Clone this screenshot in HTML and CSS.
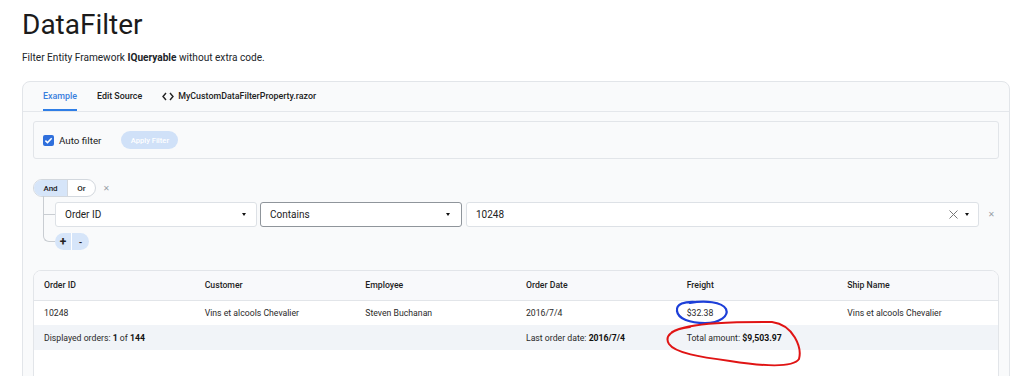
FILE: index.html
```html
<!DOCTYPE html>
<html>
<head>
<meta charset="utf-8">
<link rel="stylesheet" href="styles.css">
</head>
<body>
<div class="page">
  <h1 class="title">DataFilter</h1>
  <p class="lead">Filter Entity Framework <b>IQueryable</b> without extra code.</p>

  <div class="card">
    <div class="tabs">
      <div class="tab active">Example</div>
      <div class="tab">Edit Source</div>
      <div class="tab"><svg class="code-ic" width="12" height="9" viewBox="0 0 12 9"><path d="M4 1 L1 4.5 L4 8 M8 1 L11 4.5 L8 8" fill="none" stroke="#222" stroke-width="1.4"/></svg>MyCustomDataFilterProperty.razor</div>
    </div>

    <div class="card-body">
      <div class="auto-box">
        <span class="checkbox"><svg width="11" height="11" viewBox="0 0 11 11"><path d="M2.4 5.6 L4.5 7.6 L8.7 3.3" fill="none" stroke="#fff" stroke-width="1.5"/></svg></span>
        <span class="auto-label">Auto filter</span>
        <span class="apply-btn">Apply Filter</span>
      </div>

      <div class="group">
        <div class="group-head">
          <div class="logic">
            <span class="seg seg-on">And</span>
            <span class="seg seg-off">Or</span>
          </div>
          <span class="x-small">&#x2715;</span>
        </div>
        <div class="tree">
          <div class="branch cond">
            <div class="select field"><span>Order ID</span><span class="caret"></span></div>
            <div class="select op"><span>Contains</span><span class="caret"></span></div>
            <div class="select value"><span>10248</span><span class="value-tools"><svg width="9" height="9" viewBox="0 0 9 9"><path d="M0.5 0.5 L8.5 8.5 M8.5 0.5 L0.5 8.5" stroke="#777" stroke-width="1"/></svg><span class="caret"></span></span></div>
            <span class="x-remove">&#x2715;</span>
          </div>
          <div class="branch add">
            <div class="addgrp">
              <span class="aseg plus">+</span>
              <span class="aseg minus">-</span>
            </div>
          </div>
        </div>
      </div>

      <div class="grid">
        <table>
          <thead>
            <tr><th>Order ID</th><th>Customer</th><th>Employee</th><th>Order Date</th><th>Freight</th><th>Ship Name</th></tr>
          </thead>
          <tbody>
            <tr><td>10248</td><td>Vins et alcools Chevalier</td><td>Steven Buchanan</td><td>2016/7/4</td><td>$32.38</td><td>Vins et alcools Chevalier</td></tr>
          </tbody>
          <tfoot>
            <tr><td>Displayed orders: <b>1</b> of <b>144</b></td><td></td><td></td><td>Last order date: <b>2016/7/4</b></td><td>Total amount: <b>$9,503.97</b></td><td></td></tr>
          </tfoot>
        </table>
        <div class="grid-space"></div>
      </div>
    </div>
  </div>
</div>

<svg class="marks" width="1023" height="376" viewBox="0 0 1023 376">
  <path d="M690 303 C 705 300, 722 302, 726 309 C 729 316, 720 323, 705 323 C 690 323, 678 319, 677 311 C 676 304, 684 301, 697 302" fill="none" stroke="#1d3fd8" stroke-width="2.2" stroke-linecap="round"/>
  <path d="M672 332 C 690 322, 740 322, 772 322 C 794 325, 802 348, 799 359 C 793 368, 762 366, 730 361 C 700 357, 675 353, 669 344 C 664 336, 672 329, 690 327" fill="none" stroke="#e01414" stroke-width="2" stroke-linecap="round"/>
</svg>
</body>
</html>
```

FILE: styles.css
```css
* { box-sizing: border-box; }
html, body { margin: 0; background: #fff; }
body {
  font-family: Roboto, "Liberation Sans", sans-serif;
  color: #212529;
  position: relative;
  overflow: hidden;
  height: 376px;
}
.page { padding: 8px 13px 0 22px; }
.title {
  margin: 0;
  font-size: 28px;
  line-height: 34px;
  font-weight: 400;
  color: #1b1b1b;
}
.lead {
  margin: 8px 0 0;
  font-size: 10.1px;
  line-height: 16px;
}
.lead b { font-weight: 700; }

.card {
  margin-top: 15px;
  border: 1px solid #e2e5e9;
  border-radius: 8px;
  background: #f9fafb;
  height: 400px;
}
.tabs {
  display: flex;
  gap: 20px;
  padding-left: 20px;
  border-bottom: 1px solid #e4e7eb;
  height: 30px;
}
.tab {
  display: flex;
  align-items: center;
  font-size: 8.9px;
  font-weight: 500;
  color: #222;
  border-bottom: 2px solid transparent;
  padding-top: 1px;
}
.tab.active { color: #3a7fdd; border-bottom-color: #2f7ee6; }
.code-ic { margin-right: 4px; }

.card-body { padding: 9px 10px 0 10px; }

.auto-box {
  display: flex;
  align-items: center;
  height: 38px;
  border: 1px solid #e2e5e9;
  border-radius: 3px;
  padding-left: 9px;
  background: #f9fafb;
}
.checkbox {
  width: 11px; height: 11px;
  border-radius: 2px;
  background: #2f6fdc;
  display: flex;
}
.auto-label {
  margin-left: 5px;
  font-size: 9.8px;
  color: #222;
}
.apply-btn {
  margin-left: 20px;
  width: 57px; height: 18px;
  border-radius: 9px;
  background: #d0e1f8;
  color: #fff;
  font-size: 7.6px;
  font-weight: 500;
  display: flex; align-items: center; justify-content: center;
}

.group { margin-top: 20px; }
.group-head { display: flex; align-items: center; }
.logic {
  display: flex;
  height: 18px;
  border: 1px solid #d3d8de;
  border-radius: 9px;
  overflow: hidden;
  background: #fff;
}
.seg {
  display: flex; align-items: center; justify-content: center;
  font-size: 8px; font-weight: 500; color: #222;
}
.seg-on { width: 34px; background: #d6e5f9; border-right: 1px solid #d3d8de; }
.seg-off { width: 27px; }
.x-small { margin-left: 7px; font-size: 8px; color: #9aa0a6; }

.tree { margin-left: 10px; padding-top: 5px; display: flex; flex-direction: column; gap: 6px; }
.branch { display: flex; align-items: center; position: relative; padding-left: 12px; }
.branch::before {
  content: "";
  position: absolute;
  left: 0; top: -6px; bottom: 50%;
  width: 11px;
  border-left: 1px solid #c9cdd2;
  border-bottom: 1px solid #c9cdd2;
}
.cond::after {
  content: "";
  position: absolute;
  left: 0; top: 50%; bottom: -6px;
  border-left: 1px solid #c9cdd2;
}
.add::before { border-bottom-left-radius: 6px; }

.select {
  height: 25px;
  background: #fff;
  border: 1px solid #dde1e6;
  border-radius: 3px;
  display: flex; align-items: center; justify-content: space-between;
  padding: 0 10px 0 9px;
  font-size: 10px;
  color: #222;
}
.field { width: 202px; }
.op { width: 202px; margin-left: 3px; border-color: #8f959b; padding-right: 11px; }
.value { flex: 1; margin-left: 4px; padding-right: 9px; }
.caret {
  width: 0; height: 0;
  border-left: 2.5px solid transparent;
  border-right: 2.5px solid transparent;
  border-top: 3px solid #111;
}
.value-tools { display: flex; align-items: center; gap: 7px; }
.x-remove { margin-left: 9px; margin-right: 5px; font-size: 7.5px; color: #9aa0a6; width: 6px; }

.addgrp {
  display: flex;
  height: 17px;
  border-radius: 9px;
  overflow: hidden;
  background: #d6e5f9;
}
.aseg {
  width: 17px;
  display: flex; align-items: center; justify-content: center;
  color: #222;
}
.plus { font-size: 12px; font-weight: 700; border-right: 1px solid #fff; }
.minus { font-size: 9px; font-weight: 700; }

.grid {
  margin-top: 20px;
  background: #fff;
  border: 1px solid #e2e5e9;
  border-radius: 8px;
  overflow: hidden;
}
table { width: 100%; border-collapse: collapse; table-layout: fixed; }
th, td {
  text-align: left;
  padding: 0 0 0 10px;
  font-size: 8.7px;
  white-space: nowrap;
}
th { height: 29px; font-weight: 500; color: #1f1f1f; background: #f8f9fb; border-bottom: 1px solid #e2e5e9; }
tbody td { height: 25px; color: #2a2a2a; background: #fff; }
tfoot td { height: 25px; color: #2a2a2a; background: #f1f4f8; }
tfoot b { font-weight: 700; color: #111; }
.grid-space { height: 40px; }

.marks { position: absolute; left: 0; top: 0; pointer-events: none; }
```
